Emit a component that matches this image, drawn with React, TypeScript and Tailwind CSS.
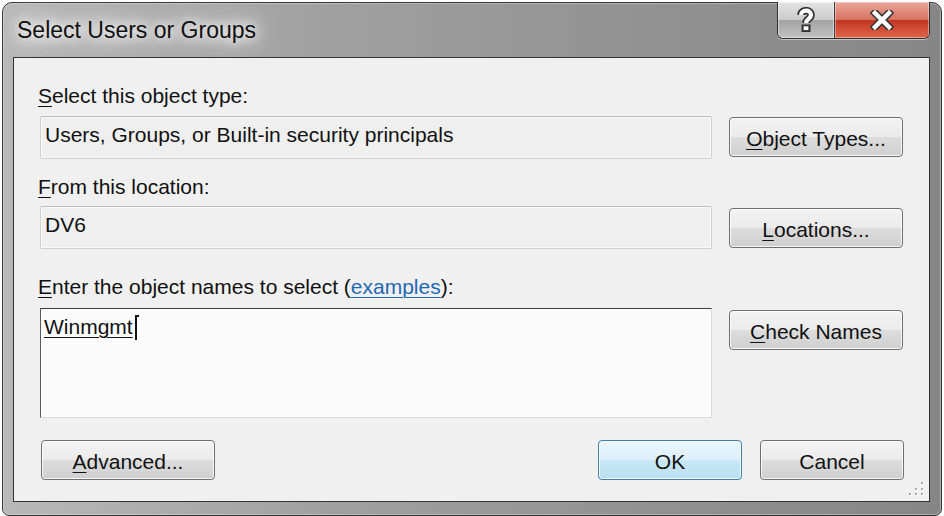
import React from "react";

interface DlgButtonProps {
  children: React.ReactNode;
  primary?: boolean;
  className?: string;
}

const Mnemonic: React.FC<{ c: string }> = ({ c }) => (
  <u className="underline decoration-1 underline-offset-[3px]">{c}</u>
);

const DlgButton: React.FC<DlgButtonProps> = ({ children, primary = false, className = "" }) => {
  return (
    <button
      className={`flex h-[40px] items-center justify-center rounded-[4px] border pt-[3px] text-[21px] leading-[26px] text-[#111] shadow-[inset_0_0_0_1px_rgba(255,255,255,0.85)] ${
        primary
          ? "border-[#3c7fb1] bg-[linear-gradient(to_bottom,#eaf6fd_0%,#dcf0fa_50%,#c9e7f6_50%,#b9dff2_100%)]"
          : "border-[#6f6f6f] bg-[linear-gradient(to_bottom,#f3f3f3_0%,#ebebeb_50%,#dddddd_50%,#cfcfcf_100%)]"
      } ${className}`}
    >
      {children}
    </button>
  );
};

const HelpIcon = () => (
  <svg width="18" height="26" viewBox="0 0 18 26">
    <path d="M4 8 C4 2.5 14 2 14 8 C14 12 9 12 9 16" fill="none" stroke="#333" strokeWidth="7.5" />
    <rect x="4.5" y="17.5" width="9" height="7.5" fill="#333" />
    <path d="M4 8 C4 2.5 14 2 14 8 C14 12 9 12 9 16" fill="none" stroke="#ffffff" strokeWidth="4.2" />
    <rect x="6.6" y="19.3" width="4.8" height="3.8" fill="#ffffff" />
  </svg>
);

const CloseIcon = () => (
  <svg width="24" height="20" viewBox="0 0 24 20">
    <path d="M5 3 L19 17 M19 3 L5 17" stroke="#363636" strokeWidth="7.5" strokeLinecap="square" />
    <path d="M5 3 L19 17 M19 3 L5 17" stroke="#ffffff" strokeWidth="4.5" strokeLinecap="square" />
  </svg>
);

const Grip = () => (
  <svg width="16" height="16" viewBox="0 0 16 16" className="absolute bottom-[5px] right-[5px]">
    {[
      [13, 2],
      [13, 8],
      [7, 8],
      [13, 13],
      [7, 13],
      [1, 13],
    ].map(([x, y]) => (
      <g key={`${x}-${y}`}>
        <rect x={x + 1} y={y + 1} width="2" height="2" fill="#ffffff" />
        <rect x={x} y={y} width="2" height="2" fill="#a9a9a9" />
      </g>
    ))}
  </svg>
);

const ReadonlyField: React.FC<{ value: string }> = ({ value }) => (
  <div className="h-[43px] w-[672px] rounded-[2px] border border-[#cfcfcf] border-t-[#bcbcbc] bg-[#efefef] pl-[4px] pt-[5px] text-[21px] leading-[26px] text-[#111] shadow-[inset_0_0_0_1px_rgba(255,255,255,0.6)]">
    {value}
  </div>
);

export default function App() {
  return (
    <div className="h-[516px] w-[944px] overflow-hidden bg-white font-['Liberation_Sans',Arial,sans-serif]">
      <div className="ml-[2px] mt-[2px] flex h-[514px] w-[940px] flex-col rounded-t-[10px] rounded-b-[7px] border border-[#353535] bg-[linear-gradient(to_right,#b8b8b8_0%,#a0a0a0_35%,#919191_70%,#868686_100%)] shadow-[inset_0_0_0_1px_rgba(255,255,255,0.3)]">
        {/* title bar */}
        <div className="flex h-[54px] shrink-0 items-start justify-between">
          <span className="ml-[14px] mt-[13px] rounded-full text-[23px] leading-[28px] text-[#111] [text-shadow:0_0_8px_#ffffff,0_0_16px_#ffffff,0_0_26px_#f0f0f0,0_0_34px_#e8e8e8]">
            Select Users or Groups
          </span>
          <div className="-mt-px mr-[11px] flex h-[37px] overflow-hidden rounded-b-[6px] border border-t-0 border-[#2e2e2e] shadow-[0_1px_0_rgba(255,255,255,0.5)]">
            <div className="flex w-[57px] items-center justify-center border-r border-[#3a3a3a] bg-[linear-gradient(to_bottom,#e4e4e4_0%,#cacaca_50%,#a3a3a3_50%,#c2c2c2_100%)] shadow-[inset_0_0_0_1px_rgba(255,255,255,0.45)]">
              <HelpIcon />
            </div>
            <div className="flex w-[94px] items-center justify-center bg-[linear-gradient(to_bottom,#e9a89b_0%,#d7705f_50%,#c1341f_50%,#e0664a_100%)] shadow-[inset_0_0_0_1px_rgba(255,255,255,0.4)]">
              <CloseIcon />
            </div>
          </div>
        </div>

        {/* client area */}
        <div className="relative mb-[13px] ml-[10px] mr-[11px] flex flex-1 flex-col border border-[#343434] bg-[#f0f0f0] pl-[26px] pt-[25px] text-[#111]">
          <div className="-ml-[2px] h-[26px] text-[21px] leading-[26px]">
            <Mnemonic c="S" />elect this object type:
          </div>
          <div className="mt-[7px] flex gap-[17px]">
            <ReadonlyField value="Users, Groups, or Built-in security principals" />
            <DlgButton className="mt-[1px] w-[174px]">
              <Mnemonic c="O" />bject Types...
            </DlgButton>
          </div>

          <div className="-ml-[2px] mt-[15px] h-[26px] text-[21px] leading-[26px]">
            <Mnemonic c="F" />rom this location:
          </div>
          <div className="mt-[6px] flex gap-[17px]">
            <ReadonlyField value="DV6" />
            <DlgButton className="mt-[2px] w-[174px]">
              <Mnemonic c="L" />ocations...
            </DlgButton>
          </div>

          <div className="-ml-[2px] mt-[25px] h-[26px] text-[21px] leading-[26px]">
            <Mnemonic c="E" />nter the object names to select (
            <span className="text-[#1f69b3] underline decoration-1 underline-offset-[3px]">examples</span>):
          </div>
          <div className="mt-[8px] flex gap-[17px]">
            <div className="flex h-[110px] w-[672px] items-start border border-b-[#dadada] border-l-[#5a5a5a] border-r-[#dadada] border-t-[#3c3c3c] bg-[#fbfbfb] pl-[3px] pt-[5px]">
              <span className="text-[21px] leading-[26px] underline decoration-1 underline-offset-[3px]">Winmgmt</span>
              <span className="ml-[2px] mt-[1px] h-[25px] w-[4px] border-l-2 border-t-2 border-[#111]" />
            </div>
            <DlgButton className="mt-[2px] w-[174px]">
              <Mnemonic c="C" />heck Names
            </DlgButton>
          </div>

          <div className="mt-[22px] flex items-center">
            <DlgButton className="ml-[1px] w-[174px]">
              <Mnemonic c="A" />dvanced...
            </DlgButton>
            <DlgButton primary className="ml-auto w-[144px]">
              OK
            </DlgButton>
            <DlgButton className="ml-[18px] mr-[25px] w-[144px]">Cancel</DlgButton>
          </div>

          <Grip />
        </div>
      </div>
    </div>
  );
}
